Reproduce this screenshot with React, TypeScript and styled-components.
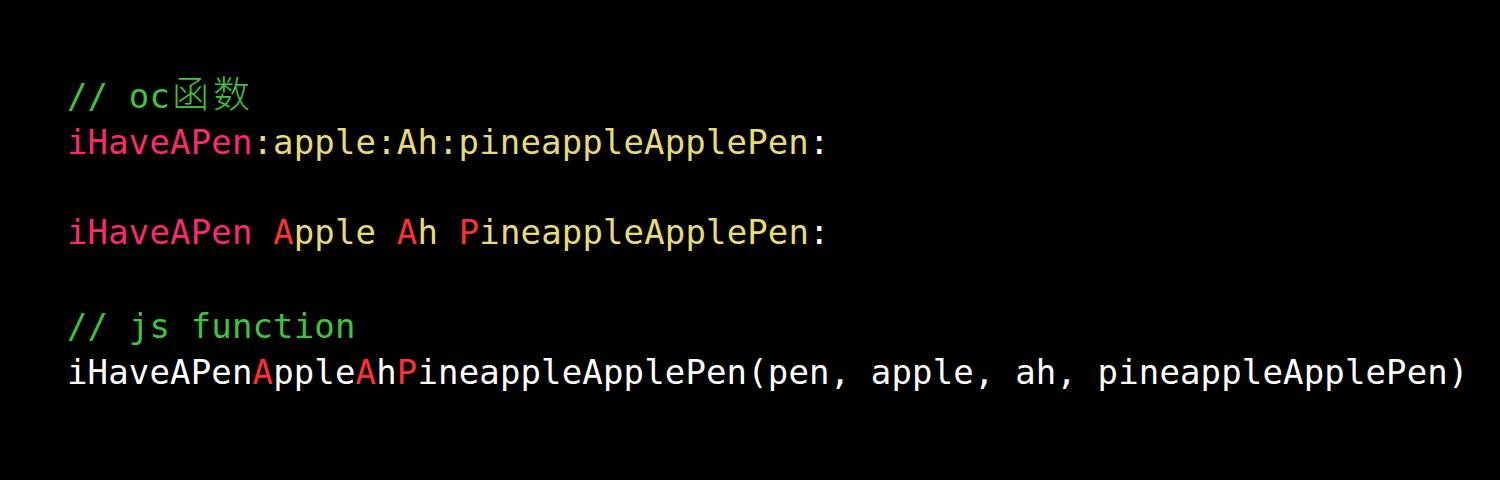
import React from "react";
import styled, { createGlobalStyle } from "styled-components";

const Global = createGlobalStyle`
  html, body { margin: 0; padding: 0; background: #000; }
`;

const Page = styled.div`
  width: 1500px;
  height: 480px;
  background: #000;
  box-sizing: border-box;
  padding: 69px 0 0 67px;
  font-family: "DejaVu Sans Mono", "Liberation Mono", monospace;
  font-size: 34px;
  letter-spacing: 0.14px;
  line-height: 46px;
  color: #ffffff;
  white-space: pre;
`;

const Block = styled.div<{ $gap: number }>`
  margin-top: ${(p) => p.$gap}px;
`;

const Line = styled.div``;

const Tok = styled.span<{ $c: "green" | "pink" | "yellow" | "red" | "white" }>`
  color: ${(p) =>
    ({
      green: "#3ec43e",
      pink: "#f92a6e",
      yellow: "#e6db74",
      red: "#fa3232",
      white: "#ffffff",
    })[p.$c]};
`;

const Cjk = styled.span`
  font-family: "Noto Sans CJK SC", sans-serif;
  font-size: 37px;
  font-weight: 300;
  letter-spacing: 4px;
  margin-left: 2px;
`;

export default function App() {
  return (
    <>
      <Global />
      <Page>
        <Block $gap={0}>
          <Line>
            <Tok $c="green">
              // oc<Cjk>函数</Cjk>
            </Tok>
          </Line>
          <Line>
            <Tok $c="pink">iHaveAPen</Tok>
            <Tok $c="yellow">:apple:Ah:pineappleApplePen</Tok>
            <Tok $c="white">:</Tok>
          </Line>
        </Block>
        <Block $gap={44}>
          <Line>
            <Tok $c="pink">iHaveAPen</Tok> <Tok $c="red">A</Tok>
            <Tok $c="yellow">pple</Tok> <Tok $c="red">A</Tok>
            <Tok $c="yellow">h</Tok> <Tok $c="red">P</Tok>
            <Tok $c="yellow">ineappleApplePen</Tok>
            <Tok $c="white">:</Tok>
          </Line>
        </Block>
        <Block $gap={48}>
          <Line>
            <Tok $c="green">// js function</Tok>
          </Line>
          <Line>
            <Tok $c="white">iHaveAPen</Tok>
            <Tok $c="red">A</Tok>
            <Tok $c="white">pple</Tok>
            <Tok $c="red">A</Tok>
            <Tok $c="white">h</Tok>
            <Tok $c="red">P</Tok>
            <Tok $c="white">ineappleApplePen(pen, apple, ah, pineappleApplePen)</Tok>
          </Line>
        </Block>
      </Page>
    </>
  );
}
